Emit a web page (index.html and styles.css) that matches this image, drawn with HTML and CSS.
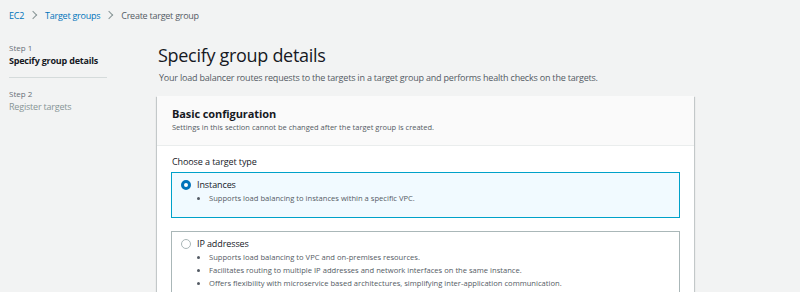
FILE: index.html
```html
<!DOCTYPE html>
<html lang="en">
<head>
    <meta charset="UTF-8">
    <meta name="viewport" content="width=device-width, initial-scale=1.0">
    <title>Create target group</title>
    <link rel="stylesheet" href="styles.css">
</head>
<body>
    <div class="breadcrumbs">
        <a href="#">EC2</a>
        <span class="chevron"></span>
        <a href="#">Target groups</a>
        <span class="chevron"></span>
        <span class="current">Create target group</span>
    </div>

    <div class="layout">
        <nav class="steps">
            <div class="step active">
                <div class="step-num">Step 1</div>
                <div class="step-name">Specify group details</div>
            </div>
            <div class="step">
                <div class="step-num">Step 2</div>
                <div class="step-name">Register targets</div>
            </div>
        </nav>

        <main class="content">
            <h1>Specify group details</h1>
            <p class="intro">Your load balancer routes requests to the targets in a target group and performs health checks on the targets.</p>

            <div class="card">
                <div class="card-header">
                    <h2>Basic configuration</h2>
                    <p>Settings in this section cannot be changed after the target group is created.</p>
                </div>
                <div class="card-body">
                    <div class="field-label">Choose a target type</div>

                    <label class="tile selected">
                        <div class="tile-title"><span class="radio"></span>Instances</div>
                        <ul>
                            <li>Supports load balancing to instances within a specific VPC.</li>
                        </ul>
                    </label>

                    <label class="tile">
                        <div class="tile-title"><span class="radio"></span>IP addresses</div>
                        <ul>
                            <li>Supports load balancing to VPC and on-premises resources.</li>
                            <li>Facilitates routing to multiple IP addresses and network interfaces on the same instance.</li>
                            <li>Offers flexibility with microservice based architectures, simplifying inter-application communication.</li>
                        </ul>
                    </label>
                </div>
            </div>
        </main>
    </div>
</body>
</html>
```

FILE: styles.css
```css
body {
    margin: 0;
    background: #f2f3f3;
    font-family: "Open Sans", sans-serif;
    color: #16191f;
}
.breadcrumbs {
    display: flex;
    align-items: center;
    gap: 6px;
    height: 30px;
    padding: 0 9px;
    font-size: 9px;
    letter-spacing: -0.25px;
}
.breadcrumbs a {
    color: #0073bb;
    text-decoration: none;
}
.breadcrumbs .current {
    color: #545b64;
}
.chevron {
    width: 5px;
    height: 5px;
    border-top: 1px solid #879596;
    border-right: 1px solid #879596;
    transform: rotate(45deg);
    margin: 0 3px 0 0;
}
.layout {
    display: flex;
}
.steps {
    width: 98px;
    padding: 11px 0 0 9px;
    margin-right: 50px;
    white-space: nowrap;
}
.step {
    padding-bottom: 10px;
}
.step.active {
    border-bottom: 1px solid #d5dbdb;
    margin-bottom: 9px;
}
.step-num {
    font-size: 8px;
    color: #687078;
    line-height: 13px;
}
.step-name {
    font-size: 9px;
    letter-spacing: -0.2px;
    line-height: 13px;
    color: #879596;
}
.step.active .step-name {
    color: #16191f;
    font-weight: 700;
}
.content {
    width: 537px;
}
h1 {
    margin: 12px 0 0 1px;
    font-size: 18px;
    font-weight: 400;
    letter-spacing: -0.3px;
    line-height: 26px;
}
.intro {
    margin: 3px 0 0 2px;
    font-size: 9px;
    letter-spacing: -0.2px;
    color: #545b64;
    line-height: 14px;
}
.card {
    margin-top: 11px;
    background: #fff;
    box-shadow: 0 1px 1px rgba(0, 28, 36, 0.3), 1px 1px 1px rgba(0, 28, 36, 0.15), -1px 1px 1px rgba(0, 28, 36, 0.15);
}
.card-header {
    background: #fafafa;
    border-bottom: 1px solid #eaeded;
    padding: 9px 15px 0;
    height: 40px;
}
h2 {
    margin: 0;
    font-size: 11px;
    font-weight: 700;
    letter-spacing: -0.1px;
    line-height: 17px;
}
.card-header p {
    margin: 0;
    font-size: 7.5px;
    color: #545b64;
    line-height: 10px;
}
.card-body {
    padding: 9px 14px 0;
}
.field-label {
    font-size: 9px;
    letter-spacing: -0.1px;
    line-height: 14px;
    margin: 0 0 3px 1px;
}
.tile {
    display: block;
    border: 1px solid #aab7b8;
    padding: 5px 9px 12px;
    margin-bottom: 13px;
}
.tile.selected {
    border-color: #00a1c9;
    background: #f1faff;
}
.tile-title {
    display: flex;
    align-items: center;
    font-size: 9px;
    letter-spacing: -0.1px;
    line-height: 14px;
}
.radio {
    width: 10px;
    height: 10px;
    box-sizing: border-box;
    border: 1px solid #aab7b8;
    border-radius: 50%;
    margin-right: 6px;
    background: #fff;
}
.selected .radio {
    border: 3px solid #0073bb;
}
.tile ul {
    margin: 0;
    padding-left: 28px;
    font-size: 7.6px;
    color: #545b64;
    line-height: 13px;
}
```
